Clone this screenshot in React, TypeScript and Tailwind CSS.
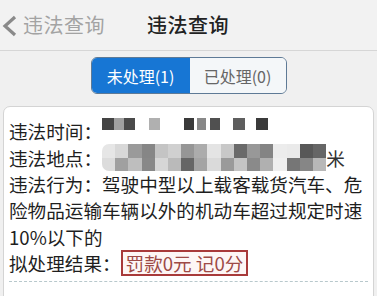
import React from 'react';

const cjk = { fontFamily: '"Noto Sans CJK SC", "Noto Sans", sans-serif' };

// pixelated blur over the time value
const timeBlocks: [number, string][] = [
  [12, '#444444'], [10, '#a0a0a0'], [11, '#4a4a4a'], [14, 'transparent'], [11, '#b0b0b0'],
  [24, 'transparent'], [10, '#3a3a3a'], [3, 'transparent'], [9, '#888888'], [4, 'transparent'],
  [10, '#505050'], [13, 'transparent'], [12, '#5e5e5e'], [11, 'transparent'], [12, '#3a3a3a'],
];

// two rows of blurred blocks over the place value
const placeTop = ['#e6e6e6', '#d8d8d8', '#9a9a9a', '#868686', '#c4c4c4', '#d0d0d0', '#969696', '#acacac', '#e4e4e4', '#c8c8c8', '#6a6a6a', '#989898', '#848484', '#ececec', '#eaeaea', '#585858', '#666666'];
const placeBottom = ['#dcdcdc', '#a0a0a0', '#bebebe', '#888888', '#d6d6d6', '#bababa', '#666666', '#a4a4a4', '#dadada', '#9a9a9a', '#c4c4c4', '#8a8a8a', '#b0b0b0', '#efefef', '#767676', '#868686', '#b8b8b8'];

export default function App() {
  return (
    <div className="w-[377px] h-[296px] overflow-hidden bg-[#f0f0f0]" style={cjk}>
      {/* Header */}
      <div className="h-[51px] flex items-center border-b border-[#d6d6d6] bg-[#f2f2f2]">
        <svg width="18" height="24" viewBox="0 0 18 24" className="ml-[1px] mt-[2px]">
          <path d="M14 3 L4 12 L14 21" fill="none" stroke="#8a8a8a" strokeWidth="3.2" />
        </svg>
        <span className="ml-[4px] text-[20px] leading-none text-[#a3a3a3] tracking-[0.5px]">违法查询</span>
        <span className="ml-[42px] text-[20px] leading-none text-[#222] font-medium tracking-[0.5px]">违法查询</span>
      </div>

      {/* Segmented tabs */}
      <div className="flex justify-center pt-[6px] pb-[12px]">
        <div className="flex w-[196px] h-[37px] rounded-[6px] border-[1.5px] border-[#5e7a96] overflow-hidden text-[16px]">
          <div className="w-[98px] flex items-center justify-center bg-[#1776d4] text-white">未处理(1)</div>
          <div className="flex-1 flex items-center justify-center bg-[#f4f7f9] text-[#666]">已处理(0)</div>
        </div>
      </div>

      {/* Record card */}
      <div className="mx-[3px] bg-white border border-[#d4d4d4] rounded-[7px] px-[5px] pt-[11px] h-[200px] text-[18.6px] leading-[26.2px] text-[#1e1e1e]">
        <div className="flex items-start">
          <span>违法时间：</span>
          <div className="flex h-[12px]">
            {timeBlocks.map(([w, c], i) => (
              <div key={i} className="h-full" style={{ width: w, background: c }} />
            ))}
          </div>
        </div>
        <div className="flex items-center">
          <span>违法地点：</span>
          <div className="flex flex-col rounded-l-[7px] overflow-hidden">
            <div className="flex">
              {placeTop.map((c, i) => (
                <div key={i} className="w-[13.2px] h-[14px]" style={{ background: c }} />
              ))}
            </div>
            <div className="flex">
              {placeBottom.map((c, i) => (
                <div key={i} className="w-[13.2px] h-[13px]" style={{ background: c }} />
              ))}
            </div>
          </div>
          <span className="text-[#333]">米</span>
        </div>
        <div className="whitespace-nowrap">违法行为：驾驶中型以上载客载货汽车、危</div>
        <div className="whitespace-nowrap">险物品运输车辆以外的机动车超过规定时速</div>
        <div>10%以下的</div>
        <div className="flex items-center">
          <span>拟处理结果：</span>
          <span className="border-2 border-[#a83a3a] bg-[#fdf6f5] text-[#9e4a46] px-[3px] leading-[22px]">罚款0元 记0分</span>
        </div>
        <div className="mt-[5px] border-t border-dashed border-[#b8c8cc]" />
      </div>
    </div>
  );
}
